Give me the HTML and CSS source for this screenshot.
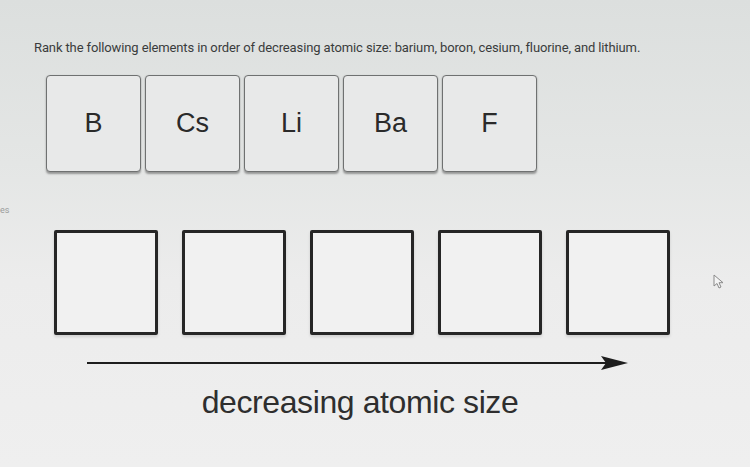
FILE: index.html
```html
<!DOCTYPE html>
<html>
<head>
<meta charset="utf-8">
<link rel="stylesheet" href="styles.css">
</head>
<body>
<div class="page">
  <span class="edge-text">es</span>
  <p class="question">Rank the following elements in order of decreasing atomic size: barium, boron, cesium, fluorine, and lithium.</p>
  <div class="tiles">
    <div class="tile">B</div>
    <div class="tile">Cs</div>
    <div class="tile">Li</div>
    <div class="tile">Ba</div>
    <div class="tile">F</div>
  </div>
  <div class="slots">
    <div class="slot"></div>
    <div class="slot"></div>
    <div class="slot"></div>
    <div class="slot"></div>
    <div class="slot"></div>
  </div>
  <div class="arrow-row">
    <svg class="arrow" width="542" height="16" viewBox="0 0 542 16">
      <line x1="0" y1="8" x2="520" y2="8" stroke="#1e1e1e" stroke-width="2.2"/>
      <path d="M514 1 L541 8 L514 15 L519 8 Z" fill="#1e1e1e"/>
    </svg>
  </div>
  <div class="label">decreasing atomic size</div>
  <svg class="cursor" width="12" height="16" viewBox="0 0 12 16">
    <path d="M1 1 L1 12 L4 9.5 L6 14 L8 13 L6 8.7 L10 8.7 Z" fill="#f4f4f4" stroke="#8a8a8a" stroke-width="1"/>
  </svg>
</div>
</body>
</html>
```
FILE: styles.css
```css
html, body {
  margin: 0;
  padding: 0;
}
body {
  width: 750px;
  height: 467px;
  overflow: hidden;
  background: linear-gradient(180deg, #dcdfde 0%, #e4e6e5 35%, #ececec 60%, #efefef 100%);
  font-family: "Liberation Sans", Arial, sans-serif;
}
.page {
  position: relative;
  height: 467px;
  display: flex;
  flex-direction: column;
}
.edge-text {
  position: absolute;
  left: 0;
  top: 205px;
  font-family: "Roboto", sans-serif;
  font-size: 9px;
  color: #9a9c9b;
}
.question {
  margin: 40px 0 0 34px;
  font-family: "Roboto", "Liberation Sans", sans-serif;
  font-size: 13px;
  letter-spacing: -0.12px;
  color: #3a3c3c;
  line-height: 15px;
}
.tiles {
  display: flex;
  gap: 4px;
  margin: 20px 0 0 46px;
}
.tile {
  width: 93px;
  height: 95px;
  border: 1.5px solid #6f7171;
  border-radius: 4px;
  background: #e8e9e9;
  box-shadow: 0 1.5px 2px rgba(0, 0, 0, 0.35);
  display: flex;
  align-items: center;
  justify-content: center;
  font-size: 27px;
  color: #2a2a2a;
}
.slots {
  display: flex;
  gap: 24px;
  margin: 58px 0 0 54px;
}
.slot {
  width: 98px;
  height: 99px;
  border: 3px solid #262626;
  border-radius: 2px;
  background: #f1f1f1;
  box-shadow: 0 2px 3px rgba(0, 0, 0, 0.12);
}
.arrow-row {
  display: flex;
  margin: 20px 0 0 87px;
}
.arrow {
  display: block;
}
.label {
  margin: 13px 0 0 0;
  padding-left: 360px;
  width: 0;
  display: flex;
  justify-content: center;
  white-space: nowrap;
  font-size: 32px;
  color: #2e2e2e;
  letter-spacing: -0.4px;
}
.cursor {
  position: absolute;
  left: 713px;
  top: 274px;
}
```
